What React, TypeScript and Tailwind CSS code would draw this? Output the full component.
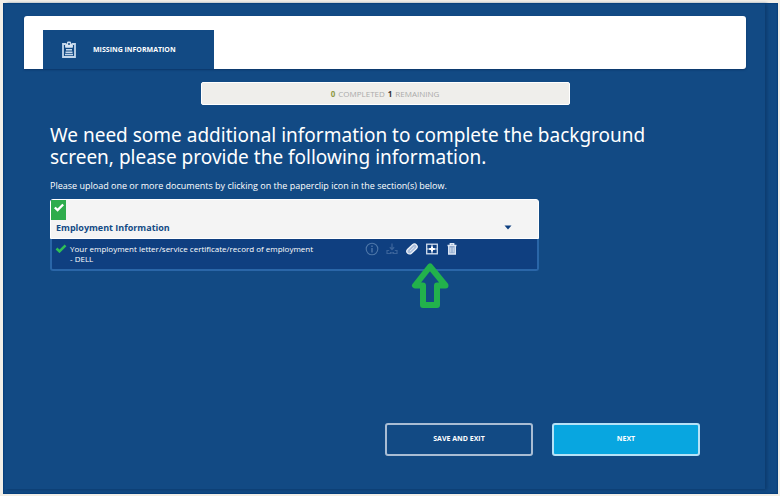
import { useState } from "react";

const ClipboardIcon = () => (
  <svg viewBox="0 0 14 17" className="h-[17px] w-[14px]" fill="none" stroke="#c3d6ea">
    <path d="M4 3H1v13h12V3h-3" strokeWidth="1.8" />
    <path d="M3.5 6.3h7V3H8.5V1h-3v2h-2z" fill="#dce8f4" strokeWidth="1" />
    <circle cx="7" cy="3" r="1" fill="#124a84" stroke="none" />
    <path d="M4 8.7h6M3.5 11.2h7M3 13.6h8" strokeWidth="1.5" />
  </svg>
);

const CheckIcon = ({ className }: any) => (
  <svg viewBox="0 0 12 10" className={className} fill="none" stroke="currentColor">
    <path d="M1 5l3.3 3.2L11 1.4" strokeWidth="2.8" />
  </svg>
);

const InfoIcon = () => (
  <svg viewBox="0 0 14 14" className="size-[14px]" fill="none" stroke="#4d76a8">
    <circle cx="7" cy="7" r="5.8" strokeWidth="1.1" />
    <path d="M7 6v4.5M7 3.5v1.4" strokeWidth="1.4" />
  </svg>
);

const DownloadIcon = () => (
  <svg viewBox="0 0 14 14" className="size-[14px]" fill="none" stroke="#3a639a">
    <path d="M7 1.5v6M4.8 5.3L7 7.5l2.2-2.2" strokeWidth="1.3" />
    <path d="M4.2 8.5H2v3h3.5V10M9.8 8.5H12v3H8.5V10M5.5 10.8h3" strokeWidth="1.2" />
  </svg>
);

const PaperclipIcon = () => (
  <svg viewBox="0 0 14 14" className="size-[14px]" fill="none" stroke="#eef3fa">
    <g transform="rotate(-43 7 7)">
      <rect x="1" y="4.3" width="12" height="5.4" rx="2.7" fill="#a9bddb" strokeWidth="1.3" />
      <path d="M4 7.2h6" strokeWidth="0.9" />
    </g>
  </svg>
);

const AddIcon = () => (
  <svg viewBox="0 0 14 14" className="size-[14px]" fill="none" stroke="#d3dfee">
    <rect x="1.7" y="2.2" width="10.6" height="9.6" strokeWidth="1.3" />
    <path d="M7 2v10M2 7h10" strokeWidth="1.1" />
    <path d="M7 4.4v5.2M4.2 7h5.6" stroke="#ffffff" strokeWidth="2" />
  </svg>
);

const TrashIcon = () => (
  <svg viewBox="0 0 14 14" className="size-[14px]" fill="none" stroke="#dbe6f4">
    <path d="M2.5 3.5h9M5.3 3V1.8h3.4V3" strokeWidth="1.4" />
    <path d="M3.7 4v8h6.6V4" fill="#8fa9cd" strokeWidth="1.4" />
    <path d="M5.8 5.5v5M8.2 5.5v5" strokeWidth="0.9" />
  </svg>
);

const GreenArrow = () => (
  <svg
    viewBox="0 0 38 48"
    className="pointer-events-none absolute top-[20px] left-[-14px] h-12 w-[38px]"
    fill="none"
    stroke="#22b14c"
    strokeWidth="6"
    strokeLinejoin="round"
  >
    <path d="M19 4.5L4 23.5H12V43h14V23.5h8.5z" />
  </svg>
);

const actions = [
  { label: "Details", icon: <InfoIcon />, disabled: true },
  { label: "Download", icon: <DownloadIcon />, disabled: true },
  { label: "Attach document", icon: <PaperclipIcon /> },
  { label: "Add document", icon: <AddIcon />, highlight: true },
  { label: "Delete", icon: <TrashIcon /> },
];

const Header = () => (
  <header className="mx-[19px] rounded-t-[3px] rounded-br-[3px] bg-white pt-[14px] pl-[19px] shadow-[0_1px_2px_#0b3567]">
    <button className="flex h-[39px] w-[171px] items-center gap-[17px] bg-[#124a84] pl-[19px] text-[7px] leading-3 font-bold text-white">
      <ClipboardIcon />
      <span>MISSING INFORMATION</span>
    </button>
  </header>
);

const EmploymentSection = () => {
  const [open, setOpen] = useState(true);

  return (
    <section className="mt-[6px] w-full max-w-[489px]">
      <button
        aria-expanded={open}
        onClick={() => setOpen(!open)}
        className="block w-full rounded-t-[3px] border border-white bg-[#f4f4f4] text-left text-[#124a84]"
      >
        <span className="flex h-5 w-[15px] justify-center bg-[#2eac4c] pt-[3px] text-white">
          <CheckIcon className="h-[9px] w-[10px]" />
        </span>
        <span className="flex h-[18px] items-start justify-between pr-[26px] pl-[5px]">
          <span className="text-[9px] leading-4 font-bold">Employment Information</span>
          <svg viewBox="0 0 8 5" className="mt-[5px] h-[5px] w-2" fill="#0d3f80">
            <path d="M0.5 0.5h7L4 4.5z" />
          </svg>
        </span>
      </button>
      {open && (
        <div className="flex h-[32px] items-start rounded-b-[3px] border-2 border-t-0 border-[#2a66a8] bg-[#0f3f80] pt-[3px] pl-[3px]">
          <CheckIcon className="mt-[2px] h-[9px] w-3 shrink-0 text-[#2fbf55]" />
          <p className="ml-[3px] w-[290px] pt-[2px] text-[8px] leading-[10px]">
            Your employment letter/service certificate/record of employment
            <br />- DELL
          </p>
          <div className="ml-[5px] flex gap-[6px]">
            {actions.map((action) => (
              <button
                key={action.label}
                aria-label={action.label}
                disabled={action.disabled}
                className="relative"
              >
                {action.icon}
                {action.highlight && <GreenArrow />}
              </button>
            ))}
          </div>
        </div>
      )}
    </section>
  );
};

const App = () => {
  return (
    <div className="min-h-screen bg-[#f3efe7] pt-[3px] pr-[2px] pb-[2px] pl-[3px] font-['Open_Sans','Noto_Sans',sans-serif] text-white">
      <div className="flex min-h-[491px] flex-col bg-[#124a84] pr-[13px] pb-[5px] pl-[2px] shadow-[inset_0_0_1px_1px_#09417c]">
        <div className="flex grow flex-col pt-[13px] shadow-[2px_1px_3px_#0c3b6e]">
          <Header />
          <div className="mx-auto mt-[13px] flex h-[23px] w-full max-w-[369px] items-center justify-center gap-[3px] rounded-[2px] border border-white bg-[#efeeeb] text-[8px] text-[#aaaaaa]">
            <b className="text-[#8f9a45]">0</b>
            <span>COMPLETED</span>
            <b className="text-[#333333]">1</b>
            <span>REMAINING</span>
          </div>
          <main className="flex grow flex-col px-[45px]">
            <h1 className="mt-[19px] max-w-[630px] font-['Noto_Sans','Open_Sans',sans-serif] text-[19px] leading-[22px]">
              We need some additional information to complete the background screen, please provide the following
              information.
            </h1>
            <p className="mt-[11px] text-[9px] leading-[14px]">
              Please upload one or more documents by clicking on the paperclip icon in the section(s) below.
            </p>
            <EmploymentSection />
            <div className="mt-auto mr-[20px] mb-[33px] flex justify-end gap-[19px] text-[7px] font-bold">
              <button className="h-[33px] w-[148px] rounded-[3px] border-2 border-[#a9bdd4]">SAVE AND EXIT</button>
              <button className="h-[33px] w-[148px] rounded-[3px] border-2 border-[#b5e2f7] bg-[#08a6e0]">NEXT</button>
            </div>
          </main>
        </div>
      </div>
    </div>
  );
};

export default App;
